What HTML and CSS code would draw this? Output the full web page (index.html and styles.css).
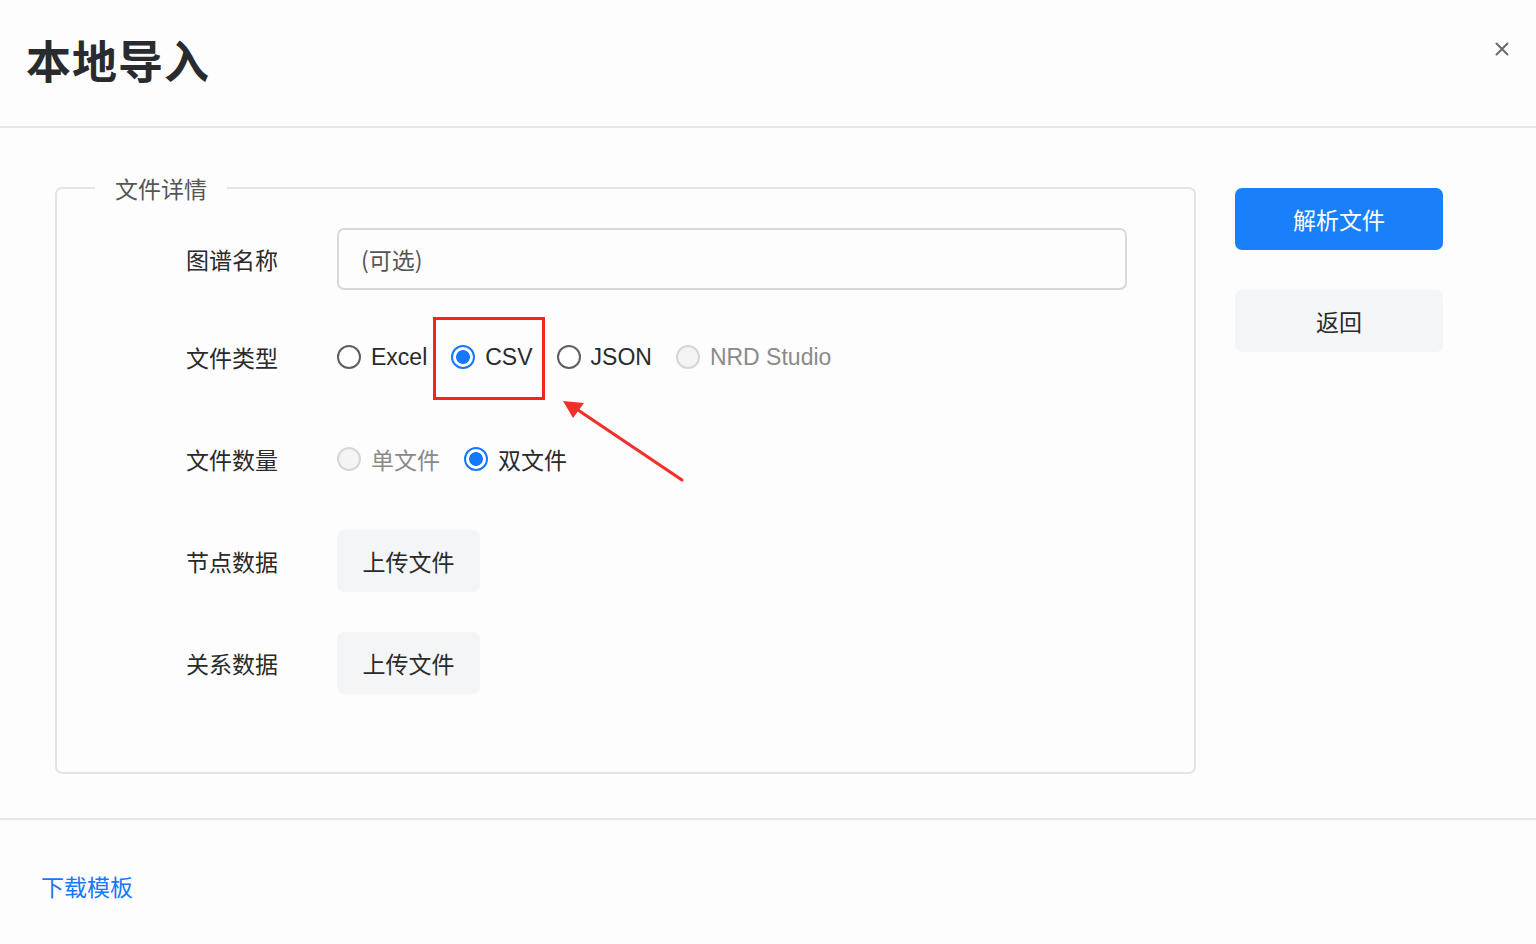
FILE: index.html
```html
<!DOCTYPE html>
<html lang="zh-CN">
<head>
<meta charset="utf-8">
<title>本地导入</title>
<link rel="stylesheet" href="styles.css">
</head>
<body>
<div class="dialog">
  <header class="header">
    <h1 class="title">本地导入</h1>
    <svg class="close" width="14" height="14" viewBox="0 0 14 14">
      <path d="M1.5 1.5 L12.5 12.5 M12.5 1.5 L1.5 12.5" stroke="#6a6a6a" stroke-width="2" stroke-linecap="round"/>
    </svg>
  </header>
  <main class="main">
    <fieldset class="details">
      <legend class="legend">文件详情</legend>
      <div class="rows">
        <div class="row row-first">
          <div class="label">图谱名称</div>
          <div class="control"><div class="input">(可选)</div></div>
        </div>
        <div class="row">
          <div class="label">文件类型</div>
          <div class="control radios annotated">
            <label class="radio"><span class="dot"></span><span class="rtext">Excel</span></label>
            <label class="radio checked"><span class="dot"></span><span class="rtext">CSV</span></label>
            <label class="radio"><span class="dot"></span><span class="rtext">JSON</span></label>
            <label class="radio disabled"><span class="dot"></span><span class="rtext">NRD Studio</span></label>
            <span class="highlight"></span>
            <svg class="arrow" width="140" height="100" viewBox="0 0 140 100">
              <line x1="128" y1="88" x2="18" y2="14" stroke="#f2302a" stroke-width="3.2" stroke-linecap="round"/>
              <polygon points="9,9 30,11 19,26" fill="#f2302a"/>
            </svg>
          </div>
        </div>
        <div class="row">
          <div class="label">文件数量</div>
          <div class="control radios">
            <label class="radio disabled"><span class="dot"></span><span class="rtext">单文件</span></label>
            <label class="radio checked"><span class="dot"></span><span class="rtext">双文件</span></label>
          </div>
        </div>
        <div class="row">
          <div class="label">节点数据</div>
          <div class="control"><button class="btn btn-light btn-upload">上传文件</button></div>
        </div>
        <div class="row">
          <div class="label">关系数据</div>
          <div class="control"><button class="btn btn-light btn-upload">上传文件</button></div>
        </div>
      </div>
    </fieldset>
    <aside class="side">
      <button class="btn btn-primary btn-side">解析文件</button>
      <button class="btn btn-light btn-side">返回</button>
    </aside>
  </main>
  <footer class="footer">
    <a class="download">下载模板</a>
  </footer>
</div>
</body>
</html>
```

FILE: styles.css
```css
html, body {
  margin: 0;
  padding: 0;
  background: #fdfdfe;
}
body {
  font-family: "Liberation Sans", "Noto Sans CJK SC", sans-serif;
  color: #2a2a2a;
  width: 1536px;
  height: 944px;
  overflow: hidden;
}
.dialog {
  display: flex;
  flex-direction: column;
}
.header {
  height: 126px;
  border-bottom: 2px solid #e2e5ea;
  display: flex;
  align-items: flex-start;
  justify-content: space-between;
  box-sizing: content-box;
}
.title {
  margin: 30px 0 0 26px;
  font-family: "Noto Sans CJK SC", sans-serif;
  font-size: 45px;
  line-height: 60px;
  font-weight: 600;
  color: #2a2b2e;
  letter-spacing: 1px;
}
.close {
  margin: 42px 27px 0 0;
  flex: none;
}
.main {
  display: flex;
  align-items: flex-start;
  padding: 44px 0 0 55px;
  height: 692px;
  box-sizing: border-box;
  border-bottom: 2px solid #e2e5ea;
}
.details {
  margin: 0;
  width: 1141px;
  height: 602px;
  box-sizing: border-box;
  border: 2px solid #e1e4e9;
  border-radius: 7px;
  padding: 0;
}
.legend {
  margin-left: 38px;
  padding: 0 20px;
  font-family: "Noto Sans CJK SC", sans-serif;
  font-size: 23px;
  line-height: 32px;
  color: #555;
}
.rows {
  padding: 24px 0 0 129px;
}
.row {
  display: flex;
  align-items: center;
  height: 62px;
  margin-bottom: 40px;
}
.row-first {
  margin-bottom: 36px;
}
.label {
  width: 151px;
  flex: none;
  font-family: "Noto Sans CJK SC", sans-serif;
  font-size: 23px;
  color: #2a2a2a;
}
.control {
  flex: 1;
  display: flex;
  align-items: center;
  height: 100%;
}
.input {
  width: 790px;
  height: 62px;
  box-sizing: border-box;
  border: 2px solid #d5d8dd;
  border-radius: 7px;
  padding-left: 22px;
  display: flex;
  align-items: center;
  font-family: "Noto Sans CJK SC", sans-serif;
  font-size: 23px;
  color: #555;
}
.radios {
  gap: 24px;
}
.annotated {
  position: relative;
}
.radio {
  display: flex;
  align-items: center;
  gap: 10px;
  font-size: 23px;
  color: #2a2a2a;
}
.dot {
  width: 24px;
  height: 24px;
  box-sizing: border-box;
  border-radius: 50%;
  border: 2px solid #5f5f5f;
  background: #fff;
  flex: none;
}
.radio.checked .dot {
  border-color: #1677ff;
  background: radial-gradient(circle, #1677ff 0 6.5px, #fff 7.3px);
}
.radio.disabled .dot {
  border-color: #d6d6d6;
  background: #f4f4f5;
}
.radio.disabled .rtext {
  color: #8a8a8a;
}
.rtext {
  font-family: "Liberation Sans", "Noto Sans CJK SC", sans-serif;
}
.highlight {
  position: absolute;
  left: 96px;
  top: -9px;
  width: 112px;
  height: 83px;
  box-sizing: border-box;
  border: 3px solid #f2261d;
}
.arrow {
  position: absolute;
  left: 217px;
  top: 66px;
}
.btn {
  border: none;
  border-radius: 7px;
  font-family: "Noto Sans CJK SC", sans-serif;
  font-size: 23px;
  cursor: pointer;
  padding: 0;
}
.btn-light {
  background: #f4f5f7;
  color: #2a2a2a;
}
.btn-primary {
  background: #1a7ffb;
  color: #fff;
}
.btn-upload {
  width: 143px;
  height: 62px;
}
.side {
  display: flex;
  flex-direction: column;
  gap: 40px;
  margin: 16px 0 0 39px;
}
.btn-side {
  width: 208px;
  height: 62px;
}
.footer {
  height: 122px;
  display: flex;
  align-items: flex-start;
  padding: 50px 0 0 41px;
  box-sizing: border-box;
}
.download {
  font-family: "Noto Sans CJK SC", sans-serif;
  font-size: 23px;
  line-height: 33px;
  color: #1677ff;
}
```
